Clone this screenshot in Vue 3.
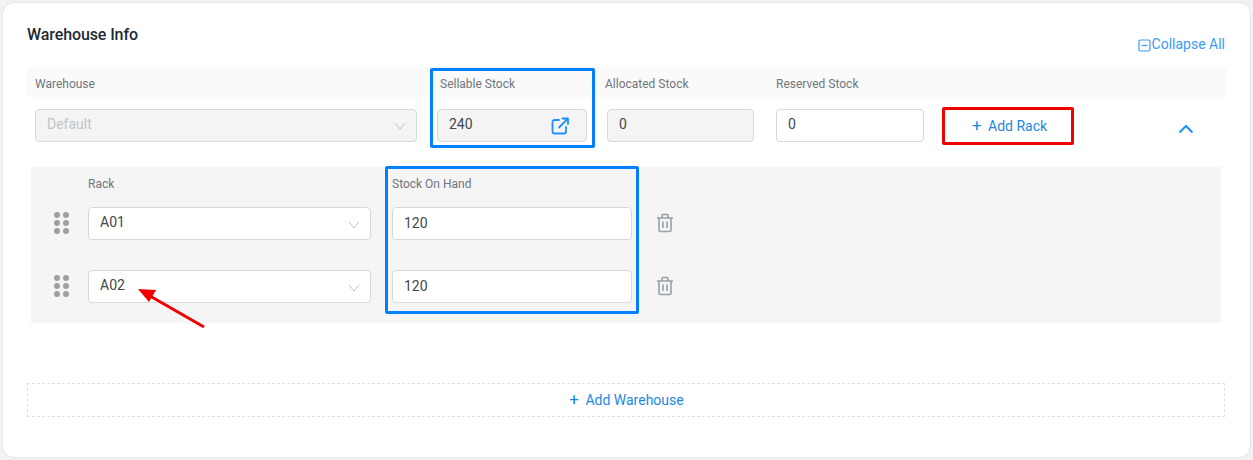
<script setup>
const racks = [{ name: 'A01', qty: 120 }, { name: 'A02', qty: 120 }]
</script>

<template>
  <div class="page">
    <section class="card">
      <header class="head">
        <h2 class="title">Warehouse Info</h2>
        <a class="collapse">
          <svg width="13" height="13" viewBox="0 0 13 13" fill="none" stroke="currentColor" stroke-width="1.2"><rect x="1" y="1" width="11" height="11" rx="1.5"/><path d="M3.500 6.500h6"/></svg>Collapse All
        </a>
      </header>

      <div class="columns">
        <span class="c-wh">Warehouse</span>
        <span class="c-sell">Sellable Stock</span>
        <span class="c-alloc">Allocated Stock</span>
        <span class="c-res">Reserved Stock</span>
      </div>

      <div class="fields">
        <div class="box disabled f-wh"><span class="muted">Default</span>
          <svg class="chev" width="12" height="8" viewBox="0 0 12 8" fill="none" stroke="#c4c7ca" stroke-width="1"><path d="M1 1l5 6 5-6"/></svg>
        </div>
        <div class="box disabled f-sell"><span>240</span>
          <svg class="open" width="20" height="20" viewBox="0 0 20 20" fill="none" stroke="#1e90ff" stroke-width="1.8" stroke-linecap="round" stroke-linejoin="round"><path d="M9 4H4.500A2 2 0 0 0 2.500 6v9.500a2 2 0 0 0 2 2H14a2 2 0 0 0 2-2V11"/><path d="M9 11.500L18 2.500M12.500 2.500H18V8"/></svg>
        </div>
        <div class="box disabled f-alloc"><span>0</span></div>
        <div class="box f-res"><span>0</span></div>
        <button class="add-rack"><span class="plus">+</span> Add Rack</button>
        <svg class="up" width="16" height="10" viewBox="0 0 16 10" fill="none" stroke="#1e90ff" stroke-width="2"><path d="M1.500 8.500L8 2l6.500 6.500"/></svg>
      </div>

      <div class="panel">
        <div class="panel-head"><span class="p-rack">Rack</span><span>Stock On Hand</span></div>
        <div v-for="r in racks" :key="r.name" class="rack-row">
          <span class="grip"><i v-for="n in 6" :key="n"></i></span>
          <div class="box f-rack"><span>{{ r.name }}</span>
            <svg class="chev" width="12" height="8" viewBox="0 0 12 8" fill="none" stroke="#bfc3c6" stroke-width="1"><path d="M1 1l5 6 5-6"/></svg>
          </div>
          <div class="box f-qty"><span>{{ r.qty }}</span></div>
          <svg class="trash" width="18" height="20" viewBox="0 0 18 20" fill="none" stroke="#9aa0a4" stroke-width="1.600"><path d="M1 5h16M6 5V2.500A1 1 0 0 1 7 1.500h4a1 1 0 0 1 1 1V5M3 5v12a1.500 1.500 0 0 0 1.500 1.500h9A1.500 1.500 0 0 0 15 17V5M7 8.500v6.500M11 8.500v6.500"/></svg>
        </div>
      </div>

      <button class="add-wh"><span class="plus">+</span> Add Warehouse</button>

      <div class="mark blue m-sell"></div>
      <div class="mark blue m-qty"></div>
      <div class="mark red m-rack"></div>
      <svg class="arrow" width="80" height="50" viewBox="0 0 80 50" fill="none"><path d="M66 39L12 8" stroke="#f00000" stroke-width="3"/><path d="M0 1l18 1-7 12z" fill="#f00000"/></svg>
    </section>
  </div>
</template>

<style scoped>
.page { width: 1253px; height: 460px; padding: 2px; box-sizing: border-box; background: #f0f2f5; font-family: Roboto, "Liberation Sans", sans-serif; overflow: hidden; }
.card { position: relative; box-sizing: border-box; width: 1249px; height: 456px; background: #fff; border: 1px solid #e4e6e8; border-radius: 12px; padding: 0 24px; }
.head { display: flex; justify-content: space-between; height: 64px; }
.title { margin: 20px 0 0; font-size: 16px; line-height: 24px; font-weight: 500; color: #1c2b33; letter-spacing: -.1px; }
.collapse { display: flex; align-items: center; gap: 1px; height: 20px; margin: 31px 1px 0 0; font-size: 14px; color: #3a9bf4; }
.collapse svg { margin-top: 2px; }
.columns { display: flex; align-items: center; width: 1200px; height: 30px; padding-top: 4px; box-sizing: border-box; background: #fafafa; border-radius: 4px 4px 0 0; font-size: 12px; color: #6f767b; }
.c-wh { margin-left: 8px; width: 405px; }
.c-sell { width: 165px; }
.c-alloc { width: 171px; }
.fields { display: flex; align-items: center; height: 32px; margin-top: 12px; padding-left: 8px; }
.box { box-sizing: border-box; display: flex; align-items: center; justify-content: space-between; height: 33px; padding: 0 12px 0 11px; background: #fff; border: 1px solid #d9d9d9; border-radius: 4px; font-size: 14px; color: #3f484d; }
.box span { position: relative; top: -1px; }
.disabled { background: #f4f4f4; }
.muted { color: #c2c4c6; }
.f-wh { width: 382px; }
.f-wh .chev, .f-rack .chev { margin-right: -2px; margin-top: 2px; }
.f-sell { width: 150px; margin-left: 20px; padding-right: 16px; }
.open { margin-top: 2px; }
.f-alloc { width: 147px; margin-left: 20px; }
.f-res { width: 148px; margin-left: 22px; }
.add-rack { width: 130px; height: 34px; margin-left: 19px; padding: 0 0 0 3px; background: #fff; border: 0; font: inherit; font-size: 14px; color: #1e88e5; }
.plus { font-size: 17px; margin-right: 3px; font-weight: 400; }
.up { margin-left: 105px; margin-top: 8px; }
.panel { box-sizing: border-box; width: 1190px; height: 156px; margin: 26px 0 0 4px; background: #f5f5f5; }
.panel-head { display: flex; align-items: center; height: 34px; font-size: 12px; color: #6f767b; }
.p-rack { margin-left: 57px; width: 304px; }
.rack-row { display: flex; align-items: center; height: 33px; margin-top: 6px; }
.rack-row + .rack-row { margin-top: 30px; }
.grip { display: grid; grid-template-columns: 6px 6px; gap: 2px 3px; margin: -2px 0 0 23px; width: 34px; }
.grip i { width: 6px; height: 6px; border-radius: 50%; background: #9aa0a4; }
.f-rack { width: 283px; }
.f-rack span { top: -2px; }
.f-qty { width: 240px; margin-left: 21px; }
.trash { margin: -2px 0 0 24px; }
.add-wh { display: block; box-sizing: border-box; width: 1198px; height: 34px; margin-top: 60px; padding: 0 0 2px 1px; background: #fff; border: 1px dashed #e2e2e2; font: inherit; font-size: 14px; color: #1e88e5; }
.mark { position: absolute; box-sizing: border-box; border: 3px solid; border-radius: 2px; pointer-events: none; }
.blue { border-color: #007fff; }
.red { border-color: #f00000; }
.m-sell { left: 427px; top: 65px; width: 165px; height: 80px; }
.m-qty { left: 382px; top: 163px; width: 254px; height: 148px; }
.m-rack { left: 939px; top: 104px; width: 132px; height: 38px; }
.arrow { position: absolute; left: 135px; top: 285px; }
</style>
